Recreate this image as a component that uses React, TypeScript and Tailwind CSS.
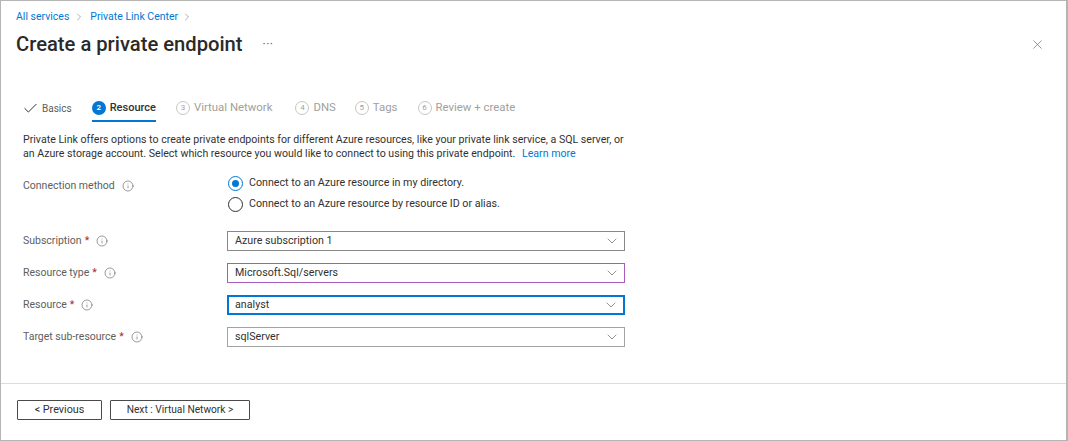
import { ChevronDown, ChevronRight, Check, X, Info } from "lucide-react";

const FONT = "font-['Roboto','Noto_Sans',sans-serif]";

const steps = [
  { n: 3, label: "Virtual Network", gap: "ml-[20px]" },
  { n: 4, label: "DNS", gap: "ml-[23px]" },
  { n: 5, label: "Tags", gap: "ml-[19px]" },
  { n: 6, label: "Review + create", gap: "ml-[20px]" },
];

const fields = [
  { label: "Subscription", value: "Azure subscription 1", box: "border-[#8a8886] pl-[7px] h-[20px]" },
  { label: "Resource type", value: "Microsoft.Sql/servers", box: "border-[#a85cc0] pl-[7px] h-[20px]" },
  { label: "Resource", value: "analyst", box: "border-2 border-[#0078d4] pl-[6px] h-[20px]" },
  { label: "Target sub-resource", value: "sqlServer", box: "border-[#a3a3a3] pl-[7px] h-[20px]" },
];

function Tip() {
  return <Info size={12} strokeWidth={1.25} className="ml-[7px] shrink-0 text-[#605e5c]" />;
}

function Select({ value, box }: { value: string; box: string }) {
  return (
    <div className={`flex w-[398px] items-center justify-between border pr-[4px] text-[#323130] ${box}`}>
      <span>{value}</span>
      <ChevronDown size={16} strokeWidth={1} className="text-[#605e5c]" />
    </div>
  );
}

function Radio({ on, label }: { on?: boolean; label: string }) {
  return (
    <div className="flex h-[21px] items-center gap-[6px]">
      <span
        className={`flex h-[15px] w-[15px] items-center justify-center rounded-full border ${
          on ? "border-[#0078d4]" : "border-[#323130]"
        }`}
      >
        {on && <span className="h-[7px] w-[7px] rounded-full bg-[#0078d4]" />}
      </span>
      <span className="text-[#323130]">{label}</span>
    </div>
  );
}

export default function App() {
  return (
    <div className={`${FONT} h-[441px] w-[1068px] bg-white text-[10.7px] text-[#323130]`}>
      <div className="flex h-full flex-col border border-r-2 border-[#b5b5b5]">
        <div className="px-[15px] pt-[9px]">
          <div className="flex h-[13px] items-center text-[10.5px] text-[#0078d4]">
            <span>All services</span>
            <ChevronRight size={12} strokeWidth={1} className="ml-[4px] mr-[5px] text-[#605e5c]" />
            <span>Private Link Center</span>
            <ChevronRight size={12} strokeWidth={1} className="mx-[3px] text-[#605e5c]" />
          </div>
          <div className="mt-[8px] flex h-[26px] items-center justify-between">
            <div className="flex items-center">
              <h1 className="text-[20.2px] font-medium text-[#2b2a29]">Create a private endpoint</h1>
              <span className="ml-[20px] text-[12px] leading-none tracking-[0.5px] text-[#605e5c]">···</span>
            </div>
            <X size={15} strokeWidth={1} className="mr-[6px] text-[#605e5c]" />
          </div>
        </div>

        <div className="mt-[41px] flex h-[23px] items-start pl-[21px]">
          <div className="flex h-[20px] items-center gap-[3px]">
            <Check size={17} strokeWidth={1.4} className="text-[#323130]" />
            <span className="text-[10px] text-[#605e5c]">Basics</span>
          </div>
          <div className="ml-[20px] flex h-[24px] items-start border-b-2 border-[#0078d4]">
            <div className="flex h-[20px] items-center gap-[4px]">
              <span className="flex h-[14px] w-[14px] items-center justify-center rounded-full bg-[#0078d4] text-[8px] font-semibold text-white">
                2
              </span>
              <span className="text-[11px] font-medium text-[#323130]">Resource</span>
            </div>
          </div>
          {steps.map((s) => (
            <div key={s.n} className={`${s.gap} flex h-[20px] items-center gap-[4px] text-[11.4px] text-[#a19f9d]`}>
              <span className="flex h-[14px] w-[14px] items-center justify-center rounded-full border border-[#c8c6c4] text-[8px]">
                {s.n}
              </span>
              <span>{s.label}</span>
            </div>
          ))}
        </div>

        <div className="mt-[12px] pl-[22px] text-[10.6px] leading-[14px]">
          <p>Private Link offers options to create private endpoints for different Azure resources, like your private link service, a SQL server, or</p>
          <p>
            an Azure storage account. Select which resource you would like to connect to using this private endpoint.{" "}
            <span className="ml-[4px] text-[#0078d4]">Learn more</span>
          </p>
        </div>

        <div className="mt-[12px] flex pl-[22px]">
          <div className="mt-[2px] flex h-[21px] w-[204px] items-center text-[10.5px] text-[#605e5c]">
            Connection method
            <Tip />
          </div>
          <div className="ml-[1px]">
            <Radio on label="Connect to an Azure resource in my directory." />
            <Radio label="Connect to an Azure resource by resource ID or alias." />
          </div>
        </div>

        <div className="mt-[16px] flex flex-col gap-[12px] pl-[22px]">
          {fields.map((f) => (
            <div key={f.label} className="flex items-center">
              <div className="flex w-[204px] items-center text-[10.5px] text-[#605e5c]">
                {f.label}
                <span className="ml-[3px] text-[#a4262c]">*</span>
                <Tip />
              </div>
              <Select value={f.value} box={f.box} />
            </div>
          ))}
        </div>

        <div className="mt-[36px] flex flex-1 items-start gap-[8px] border-t border-[#dcdcdc] pl-[16px] pt-[16px]">
          <button className="h-[20px] w-[85px] rounded-[1px] border border-[#4a4a4a] text-[10.8px] text-[#323130]">
            &lt; Previous
          </button>
          <button className="h-[20px] w-[140px] rounded-[1px] border border-[#4a4a4a] text-[10.2px] text-[#323130]">
            Next : Virtual Network &gt;
          </button>
        </div>
      </div>
    </div>
  );
}
